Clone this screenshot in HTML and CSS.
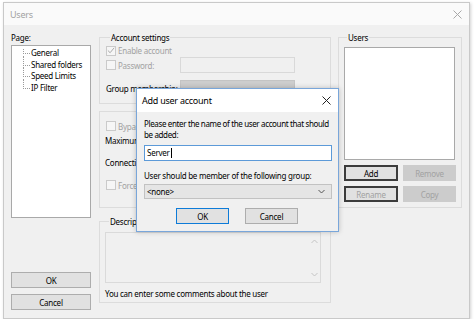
FILE: index.html
```html
<!DOCTYPE html>
<html lang="en">
    <head>
        <title>Users</title>
        <meta charset="utf-8">
        <meta name="viewport" content="width=device-width, initial-scale=1">
        <link rel="stylesheet" href="styles.css">
    </head>
    <body>
        <div class="window">
            <div class="titlebar">
                <span class="title">Users</span>
                <svg class="win-close" width="9" height="9" viewBox="0 0 9 9"><path d="M0.5 0.5 L8.5 8.5 M8.5 0.5 L0.5 8.5" stroke="#a8a8a8" stroke-width="1"/></svg>
            </div>
            <div class="client">
                <!-- page tree + main buttons -->
                <div class="col-pages">
                    <div class="label">Page:</div>
                    <ul class="tree">
                        <li>General</li>
                        <li>Shared folders</li>
                        <li>Speed Limits</li>
                        <li>IP Filter</li>
                    </ul>
                    <div class="pages-buttons">
                        <button class="btn">OK</button>
                        <button class="btn">Cancel</button>
                    </div>
                </div>

                <!-- settings of the selected user -->
                <div class="col-settings">
                    <fieldset class="group group-account">
                        <legend>Account settings</legend>
                        <div class="row row-check">
                            <span class="check">
                                <svg width="9" height="9" viewBox="0 0 9 9"><path d="M1 4.5 L3.5 7 L8 1.5" fill="none" stroke="#a8a8a8" stroke-width="1.1"/></svg>
                            </span>
                            <span class="dim">Enable account</span>
                        </div>
                        <div class="row row-field">
                            <div class="row-label"><span class="check"></span><span class="dim">Password:</span></div>
                            <div class="edit"></div>
                        </div>
                        <div class="row row-field row-group">
                            <div class="row-label">Group membership:</div>
                            <div class="combo combo-off"></div>
                        </div>
                    </fieldset>

                    <fieldset class="group group-limits">
                        <div class="row row-check row-bypass">
                            <span class="check"></span>
                            <span class="dim">Bypass userlimit of server</span>
                        </div>
                        <div class="row row-field row-text">Maximum connection count:</div>
                        <div class="row row-field row-text row-conn">Connection limit per IP:</div>
                        <div class="row row-check row-force">
                            <span class="check"></span>
                            <span class="dim">Force SSL for user login</span>
                        </div>
                    </fieldset>

                    <fieldset class="group group-desc">
                        <legend>Description</legend>
                        <div class="memo">
                            <div class="memo-scroll">
                                <svg width="7" height="5" viewBox="0 0 7 5"><path d="M0.5 4 L3.5 1 L6.5 4" fill="none" stroke="#c4c4c4" stroke-width="1"/></svg>
                                <svg width="7" height="5" viewBox="0 0 7 5"><path d="M0.5 1 L3.5 4 L6.5 1" fill="none" stroke="#c4c4c4" stroke-width="1"/></svg>
                            </div>
                        </div>
                        <div class="hint">You can enter some comments about the user</div>
                    </fieldset>
                </div>

                <!-- user list -->
                <div class="col-users">
                    <fieldset class="group group-users">
                        <legend>Users</legend>
                        <div class="userlist"></div>
                        <div class="user-buttons">
                            <button class="btn btn-dark">Add</button>
                            <button class="btn btn-off">Remove</button>
                            <button class="btn btn-dark btn-grey">Rename</button>
                            <button class="btn btn-off">Copy</button>
                        </div>
                    </fieldset>
                </div>
            </div>
        </div>

        <!-- modal dialog on top of the window -->
        <div class="dialog">
            <div class="dialog-title">
                <span>Add user account</span>
                <svg class="dialog-close" width="9" height="9" viewBox="0 0 9 9"><path d="M0.5 0.5 L8.5 8.5 M8.5 0.5 L0.5 8.5" stroke="#222" stroke-width="1"/></svg>
            </div>
            <div class="dialog-body">
                <div class="dialog-text">Please enter the name of the user account that should be added:</div>
                <div class="input">Server<span class="caret"></span></div>
                <div class="dialog-label">User should be member of the following group:</div>
                <div class="combo combo-on">
                    <span>&lt;none&gt;</span>
                    <svg width="7" height="5" viewBox="0 0 7 5"><path d="M0.5 1 L3.5 4 L6.5 1" fill="none" stroke="#555" stroke-width="1"/></svg>
                </div>
                <div class="dialog-buttons">
                    <button class="btn btn-default">OK</button>
                    <button class="btn">Cancel</button>
                </div>
            </div>
        </div>
    </body>
</html>
```

FILE: styles.css
```css
html, body {
    margin: 0;
    padding: 0;
    background-color: #ffffff;
    font-family: "Noto Sans", "Liberation Sans", sans-serif;
    font-size: 8px;
    letter-spacing: -0.25px;
    color: #000;
}

.window {
    box-sizing: border-box;
    width: 467px;
    height: 317px;
    margin: 2px 0 0 3px;
    border: 1px solid #c9c9c9;
    background-color: #f0f0f0;
    box-shadow: 1px 1px 3px rgba(0, 0, 0, 0.18);
}

.titlebar {
    height: 22px;
    display: flex;
    align-items: center;
    justify-content: space-between;
    padding: 0 6px 0 6px;
    background-color: #fafafa;
}

.title {
    color: #a3a3a3;
    font-size: 9px;
}

.win-close {
    margin-right: 1px;
}

.client {
    display: flex;
    height: 293px;
    box-sizing: border-box;
    padding: 7px 7px 8px 7px;
}

/* left column */
.col-pages {
    width: 80px;
    display: flex;
    flex-direction: column;
}

.label {
    height: 11px;
    line-height: 11px;
}

.tree {
    box-sizing: border-box;
    height: 173px;
    margin: 2px 0 0 0;
    padding: 1px 0 0 19px;
    list-style: none;
    background-color: #fff;
    border: 1px solid #a9a9a9;
}

.tree li {
    position: relative;
    height: 11.7px;
    line-height: 11.7px;
}

.tree li::before {
    content: "";
    position: absolute;
    left: -8px;
    top: -3px;
    width: 6px;
    height: 9px;
    border-left: 1px dotted #9a9a9a;
    border-bottom: 1px dotted #9a9a9a;
}

.tree li:first-child::before {
    top: 2px;
    height: 4px;
}

.pages-buttons {
    margin-top: auto;
    display: flex;
    flex-direction: column;
    gap: 6px;
}

.btn {
    box-sizing: border-box;
    height: 16px;
    padding: 0;
    margin: 0;
    font-family: inherit;
    font-size: 8px;
    letter-spacing: -0.25px;
    color: #000;
    background-color: #e1e1e1;
    border: 1px solid #adadad;
}

/* middle column */
.col-settings {
    width: 232px;
    margin-left: 8px;
    display: flex;
    flex-direction: column;
}

.group {
    margin: 0;
    padding: 0;
    min-width: 0;
    border: 1px solid #dcdcdc;
}

.group legend {
    margin-left: 4px;
    padding: 0 1px;
    height: 11px;
    line-height: 11px;
}

.row {
    display: flex;
    align-items: center;
    white-space: nowrap;
}

.row-check {
    height: 13px;
}

.row-field {
    height: 16px;
}

.row-label {
    width: 74px;
    display: flex;
    align-items: center;
}

.check {
    box-sizing: border-box;
    width: 10px;
    height: 10px;
    margin-right: 2px;
    display: flex;
    align-items: center;
    justify-content: center;
    border: 1px solid #cacaca;
    background-color: #f6f6f6;
}

.dim {
    color: #a2a2a2;
}

.group-account {
    padding: 1px 7px 7px 6px;
}

.row-group {
    margin-top: 7px;
}

.edit {
    box-sizing: border-box;
    width: 115px;
    height: 16px;
    border: 1px solid #d9d9d9;
    background-color: #f0f0f0;
}

.combo {
    box-sizing: border-box;
    display: flex;
    align-items: center;
    justify-content: space-between;
}

.combo-off {
    width: 115px;
    height: 16px;
    background-color: #cdcdcd;
    border: 1px solid #c4c4c4;
}

.group-limits {
    margin-top: 7px;
    height: 97px;
    box-sizing: border-box;
    padding: 0 0 0 6px;
}

.row-bypass {
    margin-top: 8px;
    height: 12px;
}

.row-text {
    margin-left: -1px;
}

.row-conn {
    margin-top: 6px;
}

.row-force {
    margin-top: 9px;
    height: 12px;
}

.group-desc {
    margin-top: 8px;
    padding: 0 9px 3px 5px;
}

.memo {
    box-sizing: border-box;
    height: 51px;
    margin-top: 5px;
    display: flex;
    justify-content: flex-end;
    border: 1px solid #dadada;
    background-color: #f0f0f0;
}

.memo-scroll {
    width: 12px;
    display: flex;
    flex-direction: column;
    justify-content: space-between;
    align-items: center;
    padding: 6px 0 5px 0;
}

.hint {
    height: 11px;
    line-height: 11px;
    margin-top: 5px;
}

/* right column */
.col-users {
    width: 124px;
    margin-left: 7px;
}

.group-users {
    padding: 0 6px 5px 5px;
}

.group-users legend {
    margin-left: 3px;
}

.userlist {
    box-sizing: border-box;
    height: 113px;
    margin-top: 4px;
    background-color: #fff;
    border: 1px solid #a9a9a9;
}

.user-buttons {
    margin-top: 5px;
    display: grid;
    grid-template-columns: 54px 53px;
    column-gap: 5px;
    row-gap: 5px;
}

.btn-dark {
    border: 2px solid #3c3c3c;
}

.btn-grey,
.btn-off {
    color: #a2a2a2;
}

.btn-off {
    background-color: #cccccc;
    border-color: #cccccc;
}

/* dialog */
.dialog {
    position: absolute;
    left: 136px;
    top: 88px;
    width: 203px;
    height: 144px;
    box-sizing: border-box;
    border: 1px solid #79a6da;
    background-color: #f0f0f0;
    box-shadow: 0 0 5px rgba(0, 0, 0, 0.22);
}

.dialog-title {
    height: 23px;
    display: flex;
    align-items: center;
    justify-content: space-between;
    padding: 0 7px 0 5px;
    background-color: #fff;
    font-size: 9px;
}

.dialog-body {
    padding: 6px 5px 0 7px;
}

.dialog-text,
.dialog-label {
    line-height: 11px;
}

.dialog-text {
    letter-spacing: -0.36px;
}

.input {
    box-sizing: border-box;
    height: 16px;
    margin: 5px 1px 0 0;
    padding-left: 2px;
    line-height: 14px;
    background-color: #fff;
    border: 1px solid #5c9ad8;
}

.caret {
    display: inline-block;
    width: 1px;
    height: 10px;
    margin-left: 1px;
    vertical-align: -2px;
    background-color: #000;
}

.dialog-label {
    margin-top: 9px;
}

.combo-on {
    height: 15px;
    margin: 3px 1px 0 0;
    padding: 0 6px 0 2px;
    background-color: #e5e5e5;
    border: 1px solid #c2c2c2;
}

.dialog-buttons {
    margin-top: 9px;
    display: flex;
    justify-content: center;
    gap: 16px;
    padding-right: 3px;
}

.dialog-buttons .btn {
    width: 53px;
}

.btn-default {
    border: 1px solid #0d7bd8;
}
```
